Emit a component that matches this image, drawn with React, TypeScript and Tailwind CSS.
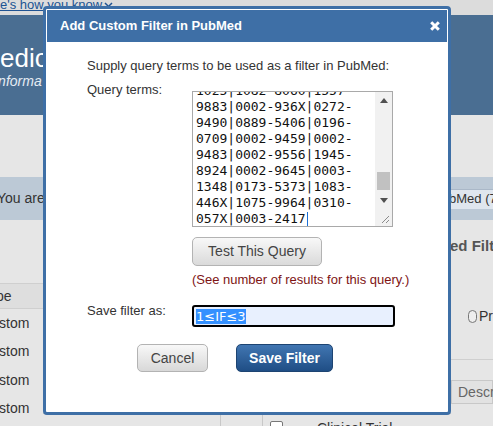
import React from "react";

const lines = [
  "1025|1082-8060|1557",
  "9883|0002-936X|0272-",
  "9490|0889-5406|0196-",
  "0709|0002-9459|0002-",
  "9483|0002-9556|1945-",
  "8924|0002-9645|0003-",
  "1348|0173-5373|1083-",
  "446X|1075-9964|0310-",
];

function Arrow({ down }: { down?: boolean }) {
  return (
    <div className="flex h-[17px] items-center justify-center">
      <svg width="8" height="5" viewBox="0 0 8 5">
        <path d={down ? "M0 0h8L4 5z" : "M0 5h8L4 0z"} fill="#505050" />
      </svg>
    </div>
  );
}

function QueryBox() {
  return (
    <div className="flex h-[136px] w-[201px] border border-[#a9a9a9] bg-white">
      <div className="min-w-0 flex-1 overflow-hidden pl-[3px] font-['DejaVu_Sans_Mono',monospace] text-[13px] leading-[16px] text-[#111]">
        <div className="-mt-[9px]">
          {lines.map((l) => (
            <div key={l} className="whitespace-pre">
              {l}
            </div>
          ))}
          <div className="flex items-center whitespace-pre">
            057X|0003-2417
            <span className="ml-[1px] inline-block h-[15px] w-px bg-[#1a6fd6]" />
          </div>
        </div>
      </div>
      <div className="flex w-[17px] flex-col bg-[#f1f1f1]">
        <Arrow />
        <div className="flex flex-1 flex-col px-[2px]">
          <div className="h-[63px]" />
          <div className="h-[18px] bg-[#c1c1c1]" />
        </div>
        <Arrow down />
        <div className="flex h-[17px] items-end justify-end p-[2px]">
          <svg width="9" height="9" viewBox="0 0 9 9">
            <path d="M8 1L1 8M8 5L5 8" stroke="#8a8a8a" strokeWidth="1" />
          </svg>
        </div>
      </div>
    </div>
  );
}

function Dialog() {
  return (
    <div className="absolute left-[43px] top-[6px] flex h-[409px] w-[408px] flex-col rounded-[4px] border-[3px] border-[#3e6fa6] bg-white p-px font-['Liberation_Sans',Arial,sans-serif] text-[13px] text-[#333]">
      <div className="flex h-[32px] items-center justify-between bg-[#3e6fa6] pl-[13px] pr-[7px]">
        <span className="text-[13px] font-bold text-white">Add Custom Filter in PubMed</span>
        <svg width="10" height="10" viewBox="0 0 10 10">
          <path d="M1.2 1.2L8.8 8.8M8.8 1.2L1.2 8.8" stroke="#fff" strokeWidth="3" />
        </svg>
      </div>

      <div className="pl-[40px]">
        <p className="mt-[16px] leading-[16px]">Supply query terms to be used as a filter in PubMed:</p>

        <div className="mt-[8px] flex">
          <span className="w-[105px] leading-[16px]">Query terms:</span>
          <div className="mt-[9px] flex flex-col">
            <QueryBox />
            <button className="mt-[10px] h-[29px] w-[130px] rounded-[5px] border border-[#b3b3b3] bg-gradient-to-b from-[#f8f8f8] to-[#dadada] text-[14px] text-[#444]">
              Test This Query
            </button>
            <p className="mt-[6px] leading-[16px] text-[#7e1414]">(See number of results for this query.)</p>
          </div>
        </div>

        <div className="mt-[14px] flex items-start">
          <span className="mt-[1px] w-[105px] leading-[16px]">Save filter as:</span>
          <div className="mt-[3px] flex h-[22px] w-[203px] items-center rounded-[3px] border-2 border-black bg-[#e8f0fe] pl-[2px] font-['DejaVu_Sans',sans-serif] text-[13px]">
            <span className="bg-[#3390ff] leading-[15px] text-white">1≤IF≤3</span>
          </div>
        </div>

        <div className="mt-[17px] flex gap-[28px] pl-[50px]">
          <button className="h-[28px] w-[71px] rounded-[5px] border border-[#b3b3b3] bg-gradient-to-b from-[#f8f8f8] to-[#d8d8d8] text-[14px] text-[#444]">
            Cancel
          </button>
          <button className="h-[28px] w-[97px] rounded-[5px] border border-[#1d4472] bg-gradient-to-b from-[#4176b2] to-[#1f4e85] text-[14px] font-bold text-white">
            Save Filter
          </button>
        </div>
      </div>
    </div>
  );
}

export default function App() {
  return (
    <div className="relative h-[426px] w-[493px] overflow-hidden bg-[#e6e6e6] font-['Liberation_Sans',Arial,sans-serif]">
      <div className="flex h-[15px] items-center bg-[#dcdcdc]">
        <span className="-mt-[6px] text-[13px] leading-[13px] text-[#205493] underline">e's how you know</span>
        <svg width="9" height="6" viewBox="0 0 9 6" className="-mt-[6px] ml-[2px]">
          <path d="M1 1l3.5 3.5L8 1" stroke="#205493" strokeWidth="1.5" fill="none" />
        </svg>
      </div>
      <div className="flex h-[100px] flex-col bg-[#4a6e92] pt-[30px] text-white">
        <span className="text-[26px] leading-[26px]">edic</span>
        <span className="-ml-[5px] mt-[2px] text-[14px] italic leading-[16px] text-[#e4ebf2]">informa</span>
      </div>
      <div className="h-[62px]" />
      <div className="flex h-[43px] items-center justify-between bg-[#bcc9d6] text-[14px] text-[#333]">
        <span className="-ml-[3px]">You are</span>
        <div className="flex h-[20px] w-[42px] items-center border-t border-[#aab8c8] bg-[#dfe6ee] text-[13px]">
          <span className="-ml-[2px] whitespace-nowrap">bMed (7</span>
        </div>
      </div>

      <div className="flex h-[206px]">
        <div className="flex w-[43px] flex-col text-[14px] text-[#333]">
          <div className="h-[63px]" />
          <div className="flex h-[26px] items-center border-y border-[#cfcfcf] bg-[#dedede]">
            <span className="-ml-[4px]">pe</span>
          </div>
          {["stom", "stom", "stom", "stom"].map((s, i) => (
            <div key={i} className="flex h-[28.5px] items-center">
              <span className="-ml-[1px]">{s}</span>
            </div>
          ))}
        </div>
        <div className="flex flex-1 flex-col justify-end">
          <div className="flex h-[13px]">
            <div className="w-[177px] border-t border-[#c8c8c8]" />
            <div className="w-[42px] border-l border-t border-[#c8c8c8]" />
            <div className="flex flex-1 gap-[34px] border-l border-t border-[#c8c8c8] pl-[7px] pt-[7px]">
              <span className="h-[13px] w-[13px] rounded-[2px] border border-[#777] bg-white" />
              <span className="text-[14px] leading-[14px] text-[#333]">Clinical Trial</span>
            </div>
          </div>
        </div>
        <div className="flex w-[42px] flex-col text-[#555]">
          <div className="mt-[17px] whitespace-nowrap text-[15px] font-bold leading-[18px]">
            <span className="-ml-[1px]">ed Filt</span>
          </div>
          <div className="mt-[51px] flex items-center">
            <span className="ml-[17px] h-[13px] w-[13px] rounded-full border border-[#777] bg-[#eee]" />
            <span className="ml-[2px] text-[14px] text-[#333]">Pr</span>
          </div>
          <div className="mt-[32px] border-t border-[#cfcfcf]" />
          <div className="mt-[20px] flex h-[24px] items-center border border-[#c8c8c8] bg-[#e2e2e2] pl-[6px] text-[14px] text-[#666]">
            Descri
          </div>
        </div>
      </div>

      <Dialog />
    </div>
  );
}
